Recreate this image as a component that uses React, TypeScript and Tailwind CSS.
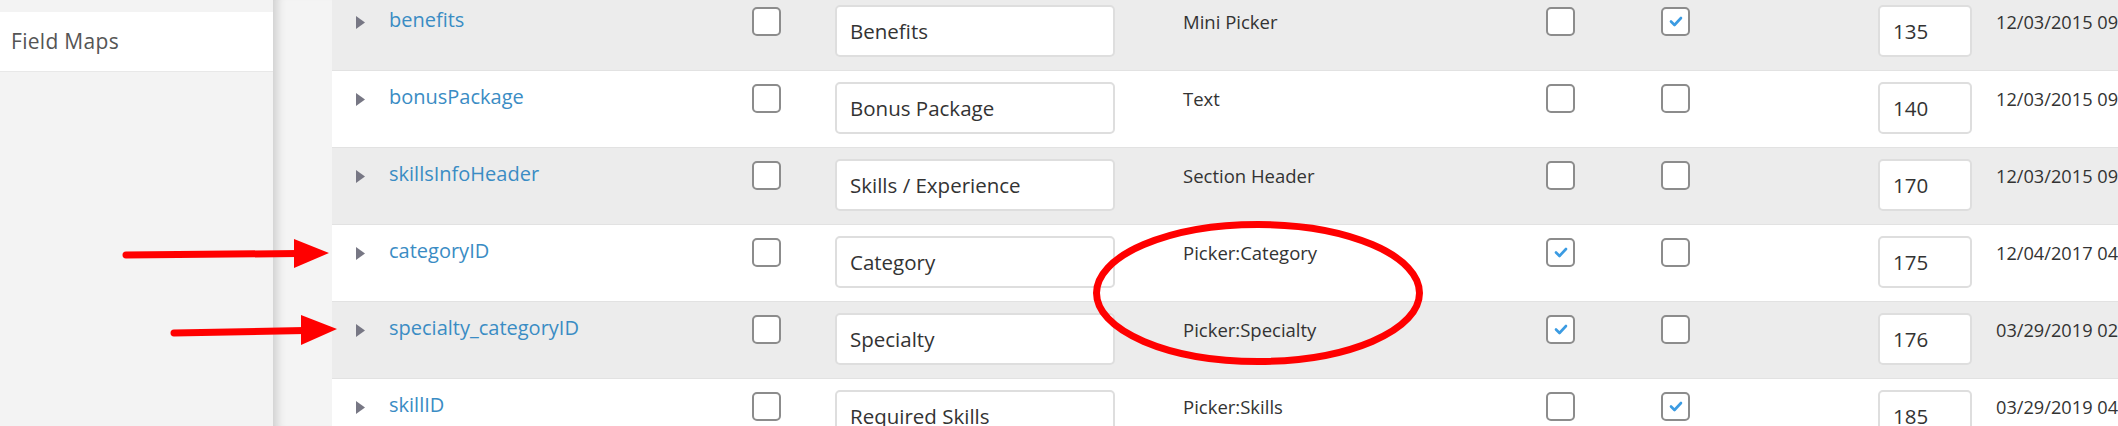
import React from "react";

type Row = {
  name: string;
  c1: boolean;
  label: string;
  type: string;
  c2: boolean;
  c3: boolean;
  num: string;
  date: string;
  gray: boolean;
};

const rows: Row[] = [
  { name: "benefits", c1: false, label: "Benefits", type: "Mini Picker", c2: false, c3: true, num: "135", date: "12/03/2015 09:14 AM", gray: true },
  { name: "bonusPackage", c1: false, label: "Bonus Package", type: "Text", c2: false, c3: false, num: "140", date: "12/03/2015 09:14 AM", gray: false },
  { name: "skillsInfoHeader", c1: false, label: "Skills / Experience", type: "Section Header", c2: false, c3: false, num: "170", date: "12/03/2015 09:14 AM", gray: true },
  { name: "categoryID", c1: false, label: "Category", type: "Picker:Category", c2: true, c3: false, num: "175", date: "12/04/2017 04:22 PM", gray: false },
  { name: "specialty_categoryID", c1: false, label: "Specialty", type: "Picker:Specialty", c2: true, c3: false, num: "176", date: "03/29/2019 02:10 PM", gray: true },
  { name: "skillID", c1: false, label: "Required Skills", type: "Picker:Skills", c2: false, c3: true, num: "185", date: "03/29/2019 04:31 PM", gray: false },
];

function Box({ checked }: { checked: boolean }) {
  return (
    <div className="mt-[13px] w-[29px] h-[29px] rounded-[5px] border-2 border-[#8c8c8c] bg-white flex items-center justify-center">
      {checked && (
        <svg width="14" height="11" viewBox="0 0 14 11">
          <path d="M2 5.5 L5.5 9 L12 2" fill="none" stroke="#3b9be2" strokeWidth="2.6" strokeLinecap="round" strokeLinejoin="round" />
        </svg>
      )}
    </div>
  );
}

function TableRow({ r }: { r: Row }) {
  return (
    <div
      className={`flex h-[77px] border-b border-[#e2e2e2] ${r.gray ? "bg-[#ececec]" : "bg-white"}`}
    >
      <div className="w-[24px] shrink-0" />
      <div className="w-[33px] shrink-0 pt-[22px]">
        <svg width="9" height="13" viewBox="0 0 9 13">
          <path d="M0 0 L9 6.5 L0 13 Z" fill="#777784" />
        </svg>
      </div>
      <div className="w-[363px] shrink-0 pt-[12px] text-[20px] leading-[28px] text-[#3a8cc4]">{r.name}</div>
      <div className="w-[83px] shrink-0">
        <Box checked={r.c1} />
      </div>
      <div className="w-[348px] shrink-0">
        <div className="mt-[11px] w-[280px] h-[52px] rounded-[5px] border-2 border-[#dedede] bg-white flex items-center pl-[13px] text-[20.5px] text-[#333]">
          {r.label}
        </div>
      </div>
      <div className="w-[363px] shrink-0 pt-[15px] text-[18.5px] leading-[26px] text-[#333]">{r.type}</div>
      <div className="w-[115px] shrink-0">
        <Box checked={r.c2} />
      </div>
      <div className="w-[217px] shrink-0">
        <Box checked={r.c3} />
      </div>
      <div className="w-[118px] shrink-0">
        <div className="mt-[11px] w-[94px] h-[52px] rounded-[5px] border-2 border-[#dedede] bg-white flex items-center pl-[13px] text-[20.5px] text-[#333]">
          {r.num}
        </div>
      </div>
      <div className="pt-[15px] text-[18.2px] leading-[26px] text-[#333] whitespace-nowrap">{r.date}</div>
    </div>
  );
}

export default function App() {
  return (
    <div
      className="relative w-[2118px] h-[426px] overflow-hidden flex bg-[#f4f4f4]"
      style={{ fontFamily: '"Open Sans", "Noto Sans", sans-serif' }}
    >
      <aside className="w-[273px] shrink-0 bg-[#f3f3f3] pt-[12px]">
        <div className="h-[60px] bg-white border-b border-[#e8e8e8] flex items-center pl-[11px] text-[21px] tracking-[0.3px] text-[#555]">
          Field Maps
        </div>
      </aside>
      <main className="flex-1 min-w-0 bg-[#f4f4f4] pl-[59px] shadow-[inset_12px_0_10px_-8px_rgba(0,0,0,0.16)]">
        <div className="-mt-[6px]">
          {rows.map((r) => (
            <TableRow key={r.name} r={r} />
          ))}
        </div>
      </main>
      <svg className="absolute left-0 top-0 pointer-events-none" width="2118" height="426" viewBox="0 0 2118 426">
        <line x1="126" y1="255" x2="298" y2="253.5" stroke="#ff0000" strokeWidth="7" strokeLinecap="round" />
        <polygon points="294,239 329,253 294,268" fill="#ff0000" />
        <line x1="174" y1="333" x2="305" y2="330.5" stroke="#ff0000" strokeWidth="7" strokeLinecap="round" />
        <polygon points="301,315 337,329 301,345" fill="#ff0000" />
        <ellipse cx="1258" cy="293" rx="161.5" ry="68.5" fill="none" stroke="#ff0000" strokeWidth="7" />
      </svg>
    </div>
  );
}
